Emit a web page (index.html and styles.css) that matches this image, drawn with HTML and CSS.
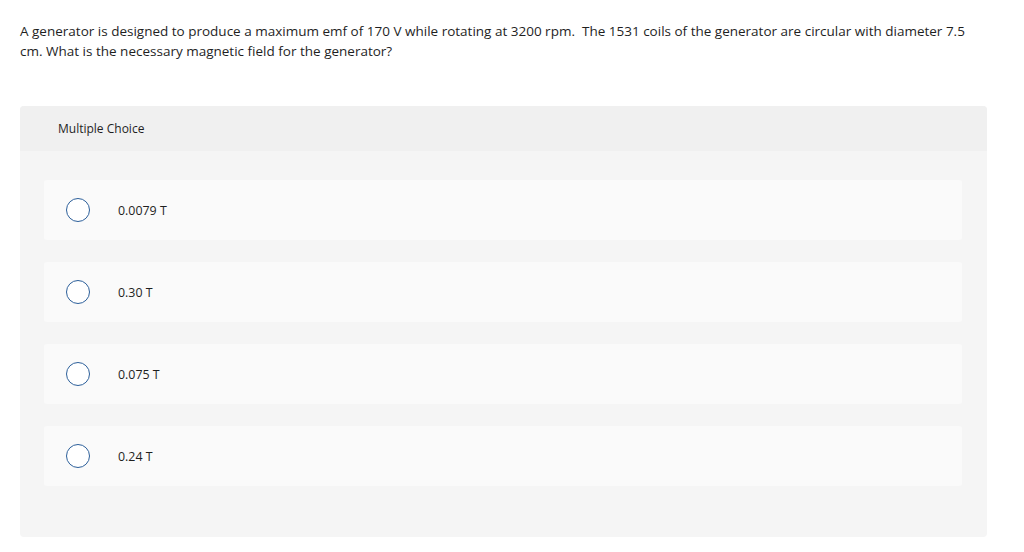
FILE: index.html
```html
<!DOCTYPE html>
<html lang="en">
<head>
    <meta charset="UTF-8">
    <title>Multiple Choice</title>
    <link rel="stylesheet" href="styles.css">
</head>
<body>
    <div class="question">
        <p class="prompt">A generator is designed to produce a maximum emf of 170 V while rotating at 3200 rpm.&nbsp; The 1531 coils of the generator are circular with diameter 7.5 cm. What is the necessary magnetic field for the generator?</p>

        <div class="panel">
            <div class="panel-head">Multiple Choice</div>
            <div class="choices">
                <label class="choice">
                    <span class="radio"></span>
                    <span class="choice-text">0.0079 T</span>
                </label>
                <label class="choice">
                    <span class="radio"></span>
                    <span class="choice-text">0.30 T</span>
                </label>
                <label class="choice">
                    <span class="radio"></span>
                    <span class="choice-text">0.075 T</span>
                </label>
                <label class="choice">
                    <span class="radio"></span>
                    <span class="choice-text">0.24 T</span>
                </label>
            </div>
        </div>
    </div>
</body>
</html>
```

FILE: styles.css
```css
body {
    margin: 0;
    font-family: "Open Sans", sans-serif;
    color: #1f1f1f;
    background: #ffffff;
}
.question {
    padding: 21px 37px 0 20px;
}
.prompt {
    margin: 0;
    max-width: 962px;
    font-size: 13.5px;
    line-height: 20px;
}
.panel {
    margin-top: 45px;
    background: #f5f5f5;
    border-radius: 4px;
    padding-bottom: 51px;
}
.panel-head {
    background: #f0f0f0;
    height: 45px;
    line-height: 45px;
    padding-left: 38px;
    font-size: 12px;
    border-radius: 4px 4px 0 0;
}
.choices {
    display: flex;
    flex-direction: column;
    gap: 22px;
    padding: 29px 25px 0 24px;
}
.choice {
    display: flex;
    align-items: center;
    height: 60px;
    background: #fafafa;
    border-radius: 3px;
    padding-left: 22px;
}
.radio {
    width: 22px;
    height: 22px;
    border: 1.5px solid #2c5f9a;
    border-radius: 50%;
    background: #ffffff;
    flex-shrink: 0;
}
.choice-text {
    margin-left: 28px;
    font-size: 12.4px;
}
```
